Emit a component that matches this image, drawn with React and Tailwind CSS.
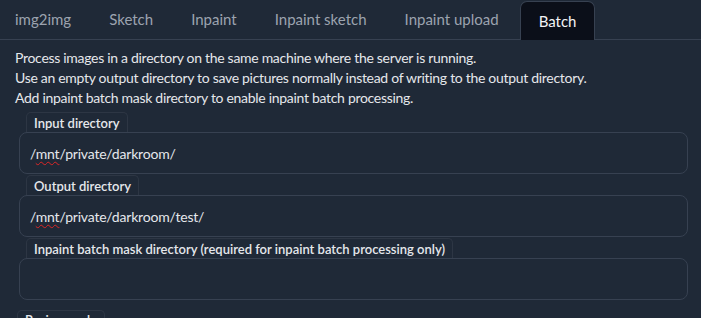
import React from 'react';

/* ── Data ─────────────────────────────────────────────── */

const TABS = ['img2img', 'Sketch', 'Inpaint', 'Inpaint sketch', 'Inpaint upload', 'Batch'];

const NOTES = [
  'Process images in a directory on the same machine where the server is running.',
  'Use an empty output directory to save pictures normally instead of writing to the output directory.',
  'Add inpaint batch mask directory to enable inpaint batch processing.',
];

const FIELDS = [
  { label: 'Input directory', value: '/mnt/private/darkroom/' },
  { label: 'Output directory', value: '/mnt/private/darkroom/test/' },
  { label: 'Inpaint batch mask directory (required for inpaint batch processing only)', value: '' },
];

/* ── Pieces ───────────────────────────────────────────── */

function Path({ value }) {
  if (!value) return null;
  // "mnt" gets the spellchecker squiggle
  const rest = value.slice(5);
  return (
    <span>
      /<span className="underline decoration-wavy decoration-[#dc2626] decoration-1 underline-offset-2">mnt</span>/{rest}
    </span>
  );
}

function Field({ label, value }) {
  return (
    <div className="flex flex-col">
      <div className="ml-[26px] self-start h-[21px] px-[7px] flex items-center rounded-t-[5px] border border-b-0 border-[#2d3644] text-[#e5e7eb] font-semibold text-[13px] leading-none">
        {label}
      </div>
      <div className="ml-[19px] mr-[13px] h-[42px] -mt-px rounded-[8px] border border-[#374151] bg-[#1f2937] px-[10px] flex items-center text-[14px] tracking-[-0.2px] text-[#e5e7eb]">
        <Path value={value} />
      </div>
    </div>
  );
}

/* ── App ──────────────────────────────────────────────── */

export default function App() {
  return (
    <div
      className="w-[701px] h-[318px] overflow-hidden bg-[#1f2937] text-[#e5e7eb]"
      style={{ fontFamily: 'Lato, "Noto Sans", sans-serif' }}
    >
      {/* Tab bar */}
      <div className="flex items-end h-[40px] border-b border-[#374151] -ml-[4px]">
        {TABS.map((t) => {
          const active = t === 'Batch';
          return (
            <div
              key={t}
              className={
                active
                  ? 'h-[39px] mb-[-1px] ml-[2px] px-[18px] flex items-center rounded-t-[7px] border border-b-0 border-[#374151] bg-[#0b0f19] text-[#f3f4f6] text-[15px]'
                  : 'h-[39px] px-[19px] flex items-center text-[#9ca3af] text-[15px]'
              }
            >
              {t}
            </div>
          );
        })}
      </div>

      {/* Notes */}
      <div className="pl-[15px] pt-[8px] text-[14px] leading-[20px] tracking-[-0.3px] text-[#e5e7eb]">
        {NOTES.map((n) => (
          <div key={n}>{n}</div>
        ))}
      </div>

      {/* Fields */}
      <div className="mt-[4px] flex flex-col gap-[1px]">
        {FIELDS.map((f) => (
          <Field key={f.label} {...f} />
        ))}
      </div>

      {/* Next block, cut off by the window */}
      <div className="mt-[10px] ml-[17px] inline-flex h-[21px] px-[7px] items-center rounded-t-[5px] border border-b-0 border-[#2d3644] font-semibold text-[13px]">
        Resize mode
      </div>
    </div>
  );
}
